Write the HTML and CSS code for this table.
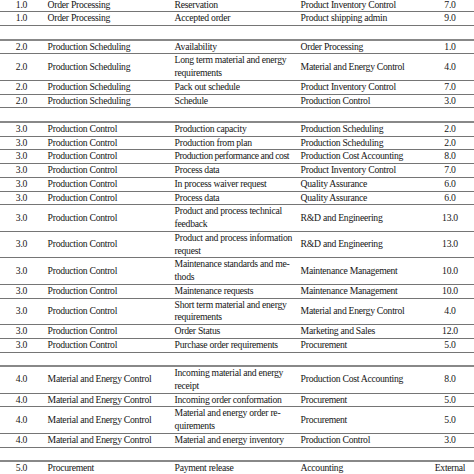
FILE: index.html
```html
<!DOCTYPE html>
<html lang="en">
<head>
<meta charset="utf-8">
<title>Information flows</title>
<link rel="stylesheet" href="styles.css">
</head>
<body>
<div class="table">
  <div class="group">
    <div class="row"><span class="num">1.0</span><span class="txt">Order Processing</span><span class="txt">Reservation</span><span class="txt">Product Inventory Control</span><span class="num">7.0</span></div>
    <div class="row"><span class="num">1.0</span><span class="txt">Order Processing</span><span class="txt">Accepted order</span><span class="txt">Product shipping admin</span><span class="num">9.0</span></div>
  </div>
  <div class="group">
    <div class="row"><span class="num">2.0</span><span class="txt">Production Scheduling</span><span class="txt">Availability</span><span class="txt">Order Processing</span><span class="num">1.0</span></div>
    <div class="row"><span class="num">2.0</span><span class="txt">Production Scheduling</span><span class="txt">Long term material and energy<br>requirements</span><span class="txt">Material and Energy Control</span><span class="num">4.0</span></div>
    <div class="row"><span class="num">2.0</span><span class="txt">Production Scheduling</span><span class="txt">Pack out schedule</span><span class="txt">Product Inventory Control</span><span class="num">7.0</span></div>
    <div class="row"><span class="num">2.0</span><span class="txt">Production Scheduling</span><span class="txt">Schedule</span><span class="txt">Production Control</span><span class="num">3.0</span></div>
  </div>
  <div class="group">
    <div class="row"><span class="num">3.0</span><span class="txt">Production Control</span><span class="txt">Production capacity</span><span class="txt">Production Scheduling</span><span class="num">2.0</span></div>
    <div class="row"><span class="num">3.0</span><span class="txt">Production Control</span><span class="txt">Production from plan</span><span class="txt">Production Scheduling</span><span class="num">2.0</span></div>
    <div class="row"><span class="num">3.0</span><span class="txt">Production Control</span><span class="txt tight">Production performance and cost</span><span class="txt">Production Cost Accounting</span><span class="num">8.0</span></div>
    <div class="row"><span class="num">3.0</span><span class="txt">Production Control</span><span class="txt">Process data</span><span class="txt">Product Inventory Control</span><span class="num">7.0</span></div>
    <div class="row"><span class="num">3.0</span><span class="txt">Production Control</span><span class="txt">In process waiver request</span><span class="txt">Quality Assurance</span><span class="num">6.0</span></div>
    <div class="row"><span class="num">3.0</span><span class="txt">Production Control</span><span class="txt">Process data</span><span class="txt">Quality Assurance</span><span class="num">6.0</span></div>
    <div class="row"><span class="num">3.0</span><span class="txt">Production Control</span><span class="txt">Product and process technical<br>feedback</span><span class="txt">R&amp;D and Engineering</span><span class="num">13.0</span></div>
    <div class="row"><span class="num">3.0</span><span class="txt">Production Control</span><span class="txt">Product and process information<br>request</span><span class="txt">R&amp;D and Engineering</span><span class="num">13.0</span></div>
    <div class="row"><span class="num">3.0</span><span class="txt">Production Control</span><span class="txt">Maintenance standards and me-<br>thods</span><span class="txt">Maintenance Management</span><span class="num">10.0</span></div>
    <div class="row"><span class="num">3.0</span><span class="txt">Production Control</span><span class="txt">Maintenance requests</span><span class="txt">Maintenance Management</span><span class="num">10.0</span></div>
    <div class="row"><span class="num">3.0</span><span class="txt">Production Control</span><span class="txt">Short term material and energy<br>requirements</span><span class="txt">Material and Energy Control</span><span class="num">4.0</span></div>
    <div class="row"><span class="num">3.0</span><span class="txt">Production Control</span><span class="txt">Order Status</span><span class="txt">Marketing and Sales</span><span class="num">12.0</span></div>
    <div class="row"><span class="num">3.0</span><span class="txt">Production Control</span><span class="txt">Purchase order requirements</span><span class="txt">Procurement</span><span class="num">5.0</span></div>
  </div>
  <div class="group">
    <div class="row"><span class="num">4.0</span><span class="txt">Material and Energy Control</span><span class="txt">Incoming material and energy<br>receipt</span><span class="txt">Production Cost Accounting</span><span class="num">8.0</span></div>
    <div class="row"><span class="num">4.0</span><span class="txt">Material and Energy Control</span><span class="txt">Incoming order conformation</span><span class="txt">Procurement</span><span class="num">5.0</span></div>
    <div class="row"><span class="num">4.0</span><span class="txt">Material and Energy Control</span><span class="txt">Material and energy order re-<br>quirements</span><span class="txt">Procurement</span><span class="num">5.0</span></div>
    <div class="row"><span class="num">4.0</span><span class="txt">Material and Energy Control</span><span class="txt">Material and energy inventory</span><span class="txt">Production Control</span><span class="num">3.0</span></div>
  </div>
  <div class="group">
    <div class="row"><span class="num">5.0</span><span class="txt">Procurement</span><span class="txt">Payment release</span><span class="txt">Accounting</span><span class="num">External</span></div>
  </div>
</div>
</body>
</html>
```
FILE: styles.css
```css
html, body {
  margin: 0;
  padding: 0;
  height: 100%;
  overflow: hidden;
  background: #ffffff;
}

.table {
  margin-top: -3.5px;
  font-family: "Liberation Serif", "Times New Roman", serif;
  font-size: 9.7px;
  letter-spacing: -0.28px;
  line-height: 12.75px;
  color: #161616;
}

.group + .group {
  margin-top: 12.5px;
}

.row {
  display: grid;
  grid-template-columns: 43px 127px 126px 130px 48px;
  align-items: center;
  border-bottom: 1px solid #757575;
  white-space: nowrap;
}

.group .row:first-child {
  border-top: 2px solid #888888;
}

.num {
  text-align: center;
}

.txt {
  padding-left: 4.6px;
}

.tight {
  letter-spacing: -0.45px;
}
```
